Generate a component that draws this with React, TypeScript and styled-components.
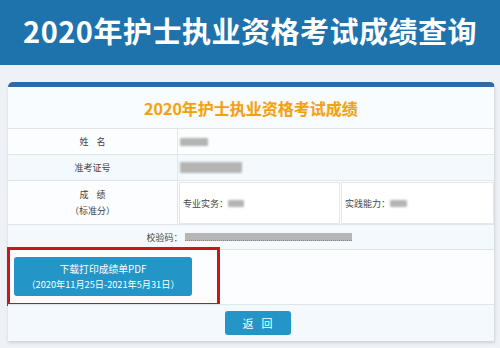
import React, {FC} from 'react';
import styled, {createGlobalStyle} from 'styled-components';

const Global = createGlobalStyle`
  html, body {
    margin: 0;
    padding: 0;
    background: #eef1f5;
  }
  body {
    width: 500px;
    height: 348px;
    overflow: hidden;
    font-family: "Noto Sans CJK SC", "Noto Sans", sans-serif;
  }
`;

const Header = styled.header`
  height: 65px;
  background: #1f73ad;
  display: flex;
  align-items: center;
  justify-content: center;
`;

const HeaderTitle = styled.h1`
  margin: 0 0 4px 0;
  color: #ffffff;
  font-size: 29px;
  font-weight: 700;
  letter-spacing: 0.5px;
  line-height: 1;
`;

const Card = styled.section`
  margin: 17px 5px 0 8px;
  background: #f8fcff;
  border-top: 5px solid #2f69a8;
  border-radius: 5px 5px 0 0;
  border-right: 1px solid #d9dee4;
  box-shadow: 0 2px 3px rgba(0, 0, 0, 0.12);
`;

const CardTitle = styled.h2`
  margin: 0;
  height: 41px;
  display: flex;
  align-items: center;
  justify-content: center;
  color: #f0a114;
  font-size: 16px;
  font-weight: 700;
  text-shadow: 0 0 2px rgba(255, 220, 150, 0.6);
`;

const Row = styled.div<{ $h: number; $tint?: boolean }>`
  display: flex;
  height: ${p => p.$h}px;
  border-top: 1px solid #dfe5eb;
  background: ${p => (p.$tint ? '#f4f9fd' : '#fbfdff')};
  position: relative;
`;

const Label = styled.div`
  width: 169px;
  flex: none;
  border-right: 1px solid #e2e7ec;
  display: flex;
  flex-direction: column;
  align-items: center;
  justify-content: center;
  gap: 4px;
  color: #444;
  font-size: 9px;
  line-height: 12px;
`;

const Value = styled.div`
  flex: 1;
  display: flex;
  align-items: center;
  padding-left: 2px;
  color: #444;
  font-size: 9px;
`;

const Split = styled.div`
  flex: 1;
  display: flex;
  padding: 1px 0 0 1px;
  gap: 1px;
`;

const SubCell = styled.div<{ $w?: number }>`
  ${p => (p.$w ? `width: ${p.$w}px; flex: none;` : 'flex: 1;')}
  border: 1px solid #e3e8ed;
  background: #ffffff;
  display: flex;
  align-items: center;
  padding-left: 3px;
  color: #444;
  font-size: 9px;
`;

const Blur = styled.span<{ $w: number; $h: number }>`
  display: inline-block;
  width: ${p => p.$w}px;
  height: ${p => p.$h}px;
  background: #b4b4b4;
  border-radius: 1px;
  filter: blur(0.8px);
`;

const Center = styled.div`
  flex: 1;
  display: flex;
  align-items: center;
  justify-content: center;
  gap: 2px;
  color: #444;
  font-size: 9px;
  padding-right: 4px;
`;

const Dotted = styled.span`
  display: inline-block;
  width: 167px;
  height: 7px;
  background: #b6b6b6;
  border-bottom: 1px dotted #888;
  filter: blur(0.5px);
`;

const DownloadArea = styled.div`
  padding: 7px 0 0 6px;
`;

const RedFrame = styled.div`
  position: absolute;
  left: -1px;
  top: -3px;
  width: 207px;
  height: 53px;
  border: 3px solid #c6171d;
  pointer-events: none;
`;

const BlueButton = styled.button<{ $w: number; $h: number }>`
  width: ${p => p.$w}px;
  height: ${p => p.$h}px;
  border: none;
  border-radius: 3px;
  background: #2395c7;
  color: #ffffff;
  font-family: "Noto Sans CJK SC", "Noto Sans", sans-serif;
  padding: 0;
  display: flex;
  flex-direction: column;
  align-items: center;
  justify-content: center;
  cursor: pointer;
`;

const BtnLine = styled.span<{ $size: number }>`
  font-size: ${p => p.$size}px;
  line-height: 15px;
  white-space: nowrap;
`;

const BackRow = styled.div`
  flex: 1;
  display: flex;
  justify-content: center;
  align-items: flex-start;
  padding: 6px 0 0 14px;
`;

const BackText = styled.span`
  font-size: 11px;
  letter-spacing: 1px;
  white-space: pre;
`;

const App: FC = () => {
  return (
    <>
      <Global/>
      <Header>
        <HeaderTitle>2020年护士执业资格考试成绩查询</HeaderTitle>
      </Header>

      <Card>
        <CardTitle>2020年护士执业资格考试成绩</CardTitle>

        <Row $h={25}>
          <Label>姓&nbsp;&nbsp;&nbsp;&nbsp;名</Label>
          <Value><Blur $w={28} $h={8}/></Value>
        </Row>

        <Row $h={25} $tint>
          <Label>准考证号</Label>
          <Value><Blur $w={62} $h={11}/></Value>
        </Row>

        <Row $h={43}>
          <Label>
            <span>成&nbsp;&nbsp;&nbsp;&nbsp;绩</span>
            <span>（标准分）</span>
          </Label>
          <Split>
            <SubCell $w={156}>专业实务：<Blur $w={16} $h={7}/></SubCell>
            <SubCell>实践能力：<Blur $w={17} $h={7}/></SubCell>
          </Split>
        </Row>

        <Row $h={24} $tint>
          <Center>校验码：<Dotted/></Center>
        </Row>

        <Row $h={54}>
          <DownloadArea>
            <BlueButton $w={178} $h={39}>
              <BtnLine $size={9.8}>下载打印成绩单PDF</BtnLine>
              <BtnLine $size={9.2}>（2020年11月25日-2021年5月31日）</BtnLine>
            </BlueButton>
          </DownloadArea>
          <RedFrame/>
        </Row>

        <Row $h={36} $tint>
          <BackRow>
            <BlueButton $w={66} $h={24}>
              <BackText>返  回</BackText>
            </BlueButton>
          </BackRow>
        </Row>
      </Card>
    </>
  );
};

export default App;
